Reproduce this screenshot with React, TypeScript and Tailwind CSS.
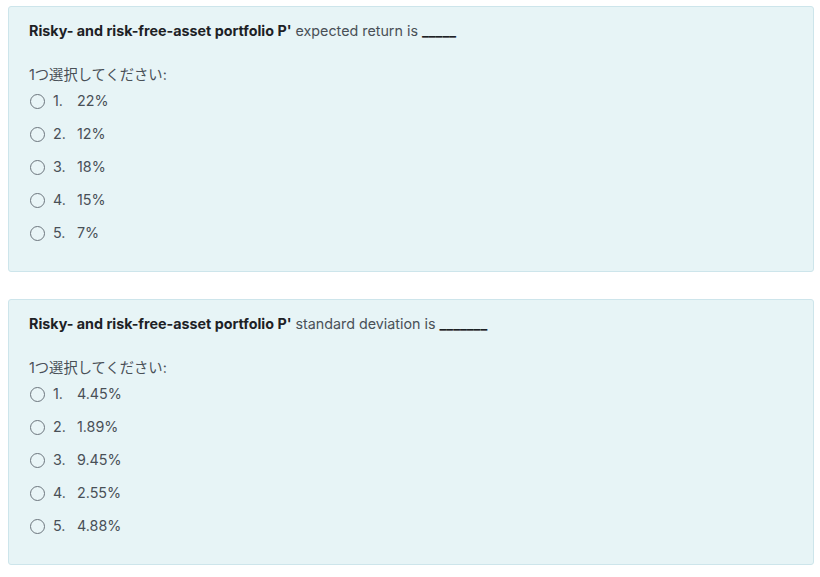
import React from 'react';

interface Question {
  stem: string;
  tail: string;
  blank: string;
  options: string[];
}

const questions: Question[] = [
  {
    stem: "Risky- and risk-free-asset portfolio P'",
    tail: ' expected return is ',
    blank: '_____',
    options: ['22%', '12%', '18%', '15%', '7%'],
  },
  {
    stem: "Risky- and risk-free-asset portfolio P'",
    tail: ' standard deviation is ',
    blank: '_______',
    options: ['4.45%', '1.89%', '9.45%', '2.55%', '4.88%'],
  },
];

function Radio() {
  return (
    <span className="inline-block w-[15px] h-[15px] rounded-full border-[1.5px] border-[#6c757d] bg-white/10 shrink-0" />
  );
}

function QuestionCard({ q }: { q: Question }) {
  return (
    <div className="w-[806px] bg-[#e7f4f6] border border-[#cde5eb] rounded-[3px] pl-[20px] pt-[14px] pb-[28px]">
      <p className="text-[14.3px] leading-[20px] text-[#495057]">
        <span className="font-bold text-[#1d2125]">{q.stem}</span>
        {q.tail}
        <span className="font-bold text-[#1d2125]">{q.blank}</span>
      </p>
      <p className="mt-[24px] text-[14.3px] leading-[20px] text-[#495057]">1つ選択してください:</p>
      <div className="mt-[6px] flex flex-col gap-[13px]">
        {q.options.map((opt, i) => (
          <div key={i} className="flex items-center h-[20px] text-[14.3px] text-[#495057]">
            <span className="ml-[1px] flex">
              <Radio />
            </span>
            <span className="ml-[8px] w-[24px]">{i + 1}.</span>
            <span>{opt}</span>
          </div>
        ))}
      </div>
    </div>
  );
}

export default function App() {
  return (
    <div className="min-h-screen bg-white pl-[8px] pt-[6px] pb-[10px] font-['Inter','Noto_Sans_CJK_JP',sans-serif]">
      <div className="flex flex-col gap-[27px]">
        {questions.map((q, i) => (
          <QuestionCard key={i} q={q} />
        ))}
      </div>
    </div>
  );
}
